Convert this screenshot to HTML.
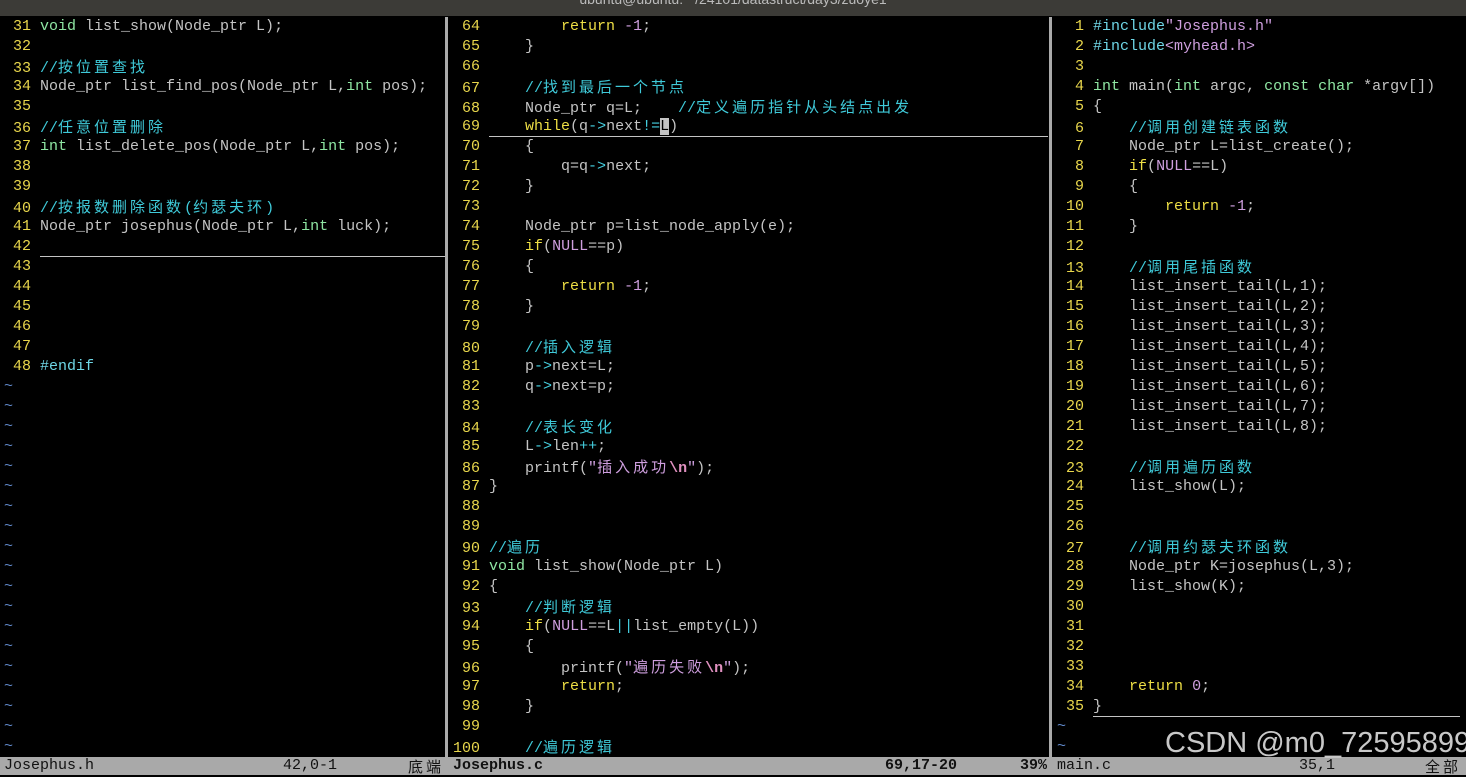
<!DOCTYPE html>
<html><head><meta charset="utf-8"><style>
*{margin:0;padding:0}
body{width:1466px;height:775px;background:#000;overflow:hidden;position:relative;font-family:"Liberation Mono","Noto Sans CJK SC",monospace;font-size:15px;color:#c4c4c4}
.tb{position:absolute;left:0;top:0;width:1466px;height:16px;background:#3c3b37;overflow:hidden}
.tb span{position:absolute;left:0;width:1466px;text-align:center;top:-9px;font-family:"Liberation Sans",sans-serif;font-size:14px;color:#bbb}
.pane{position:absolute;top:17px;line-height:20px;overflow:hidden}
.pane div{height:20px;position:relative;white-space:pre;line-height:20px;overflow:visible}
.n{color:#e8d64c}
.k{color:#8fe6a3}
.s{color:#eedf45}
.c{color:#3fcad9}
.p{color:#6fd6e6}
.q{color:#cf9fdf}
.o{color:#45cfe0}
.t{color:#5f87c8}
.z{font-family:"Noto Sans CJK SC",sans-serif;letter-spacing:3px;line-height:20px}
.sep{position:absolute;top:17px;height:740px;width:3px;background:#aaa}
.st{position:absolute;top:757px;left:0;width:1466px;height:18px;background:#a9a9a9;color:#111;white-space:pre;line-height:18px}
.st span{position:absolute;top:0}
.wm{position:absolute;left:1165px;top:727px;font-family:"Liberation Sans",sans-serif;font-size:29px;color:rgba(235,235,235,.85);white-space:nowrap}
.cur{background:#c4c4c4;color:#000}
.ul{position:absolute;left:36px;right:0;top:0;height:19px;border-bottom:1px solid #c4c4c4}
</style></head><body>
<div class="tb"><span>ubuntu@ubuntu: ~/24101/datastruct/day3/zuoye1</span></div>

<div class="pane" style="left:4px;width:441px"><div><span class="n"> 31 </span><span class="k">void</span> list_show(Node_ptr L);</div><div><span class="n"> 32 </span></div><div><span class="n"> 33 </span><span class="c">//<span class="z">按位置查找</span></span></div><div><span class="n"> 34 </span>Node_ptr list_find_pos(Node_ptr L,<span class="k">int</span> pos);</div><div><span class="n"> 35 </span></div><div><span class="n"> 36 </span><span class="c">//<span class="z">任意位置删除</span></span></div><div><span class="n"> 37 </span><span class="k">int</span> list_delete_pos(Node_ptr L,<span class="k">int</span> pos);</div><div><span class="n"> 38 </span></div><div><span class="n"> 39 </span></div><div><span class="n"> 40 </span><span class="c">//<span class="z">按报数删除函数</span>(<span class="z">约瑟夫环</span>)</span></div><div><span class="n"> 41 </span>Node_ptr josephus(Node_ptr L,<span class="k">int</span> luck);</div><div><span class="n"> 42 </span><span class="ul"></span></div><div><span class="n"> 43 </span></div><div><span class="n"> 44 </span></div><div><span class="n"> 45 </span></div><div><span class="n"> 46 </span></div><div><span class="n"> 47 </span></div><div><span class="n"> 48 </span><span class="p">#endif</span></div><div class="t">~</div><div class="t">~</div><div class="t">~</div><div class="t">~</div><div class="t">~</div><div class="t">~</div><div class="t">~</div><div class="t">~</div><div class="t">~</div><div class="t">~</div><div class="t">~</div><div class="t">~</div><div class="t">~</div><div class="t">~</div><div class="t">~</div><div class="t">~</div><div class="t">~</div><div class="t">~</div><div class="t">~</div></div>
<div class="sep" style="left:445px"></div>

<div class="pane" style="left:453px;width:595px"><div><span class="n"> 64 </span>        <span class="s">return</span> <span class="q">-1</span>;</div><div><span class="n"> 65 </span>    }</div><div><span class="n"> 66 </span></div><div><span class="n"> 67 </span>    <span class="c">//<span class="z">找到最后一个节点</span></span></div><div><span class="n"> 68 </span>    Node_ptr q=L;    <span class="c">//<span class="z">定义遍历指针从头结点出发</span></span></div><div><span class="n"> 69 </span>    <span class="s">while</span>(q<span class="o">-&gt;</span>next<span class="o">!=</span><span class="cur">L</span>)<span class="ul"></span></div><div><span class="n"> 70 </span>    {</div><div><span class="n"> 71 </span>        q=q<span class="o">-&gt;</span>next;</div><div><span class="n"> 72 </span>    }</div><div><span class="n"> 73 </span></div><div><span class="n"> 74 </span>    Node_ptr p=list_node_apply(e);</div><div><span class="n"> 75 </span>    <span class="s">if</span>(<span class="q">NULL</span>==p)</div><div><span class="n"> 76 </span>    {</div><div><span class="n"> 77 </span>        <span class="s">return</span> <span class="q">-1</span>;</div><div><span class="n"> 78 </span>    }</div><div><span class="n"> 79 </span></div><div><span class="n"> 80 </span>    <span class="c">//<span class="z">插入逻辑</span></span></div><div><span class="n"> 81 </span>    p<span class="o">-&gt;</span>next=L;</div><div><span class="n"> 82 </span>    q<span class="o">-&gt;</span>next=p;</div><div><span class="n"> 83 </span></div><div><span class="n"> 84 </span>    <span class="c">//<span class="z">表长变化</span></span></div><div><span class="n"> 85 </span>    L<span class="o">-&gt;</span>len<span class="o">++</span>;</div><div><span class="n"> 86 </span>    printf(<span class="q">"<span class="z">插入成功</span><b style="color:#e090c0">\n</b>"</span>);</div><div><span class="n"> 87 </span>}</div><div><span class="n"> 88 </span></div><div><span class="n"> 89 </span></div><div><span class="n"> 90 </span><span class="c">//<span class="z">遍历</span></span></div><div><span class="n"> 91 </span><span class="k">void</span> list_show(Node_ptr L)</div><div><span class="n"> 92 </span>{</div><div><span class="n"> 93 </span>    <span class="c">//<span class="z">判断逻辑</span></span></div><div><span class="n"> 94 </span>    <span class="s">if</span>(<span class="q">NULL</span>==L<span class="o">||</span>list_empty(L))</div><div><span class="n"> 95 </span>    {</div><div><span class="n"> 96 </span>        printf(<span class="q">"<span class="z">遍历失败</span><b style="color:#e090c0">\n</b>"</span>);</div><div><span class="n"> 97 </span>        <span class="s">return</span>;</div><div><span class="n"> 98 </span>    }</div><div><span class="n"> 99 </span></div><div><span class="n">100 </span>    <span class="c">//<span class="z">遍历逻辑</span></span></div></div>
<div class="sep" style="left:1049px"></div>

<div class="pane" style="left:1057px;width:409px"><div><span class="n">  1 </span><span class="p">#include</span><span class="q">"Josephus.h"</span></div><div><span class="n">  2 </span><span class="p">#include</span><span class="q">&lt;myhead.h&gt;</span></div><div><span class="n">  3 </span></div><div><span class="n">  4 </span><span class="k">int</span> main(<span class="k">int</span> argc, <span class="k">const</span> <span class="k">char</span> *argv[])</div><div><span class="n">  5 </span>{</div><div><span class="n">  6 </span>    <span class="c">//<span class="z">调用创建链表函数</span></span></div><div><span class="n">  7 </span>    Node_ptr L=list_create();</div><div><span class="n">  8 </span>    <span class="s">if</span>(<span class="q">NULL</span>==L)</div><div><span class="n">  9 </span>    {</div><div><span class="n"> 10 </span>        <span class="s">return</span> <span class="q">-1</span>;</div><div><span class="n"> 11 </span>    }</div><div><span class="n"> 12 </span></div><div><span class="n"> 13 </span>    <span class="c">//<span class="z">调用尾插函数</span></span></div><div><span class="n"> 14 </span>    list_insert_tail(L,1);</div><div><span class="n"> 15 </span>    list_insert_tail(L,2);</div><div><span class="n"> 16 </span>    list_insert_tail(L,3);</div><div><span class="n"> 17 </span>    list_insert_tail(L,4);</div><div><span class="n"> 18 </span>    list_insert_tail(L,5);</div><div><span class="n"> 19 </span>    list_insert_tail(L,6);</div><div><span class="n"> 20 </span>    list_insert_tail(L,7);</div><div><span class="n"> 21 </span>    list_insert_tail(L,8);</div><div><span class="n"> 22 </span></div><div><span class="n"> 23 </span>    <span class="c">//<span class="z">调用遍历函数</span></span></div><div><span class="n"> 24 </span>    list_show(L);</div><div><span class="n"> 25 </span></div><div><span class="n"> 26 </span></div><div><span class="n"> 27 </span>    <span class="c">//<span class="z">调用约瑟夫环函数</span></span></div><div><span class="n"> 28 </span>    Node_ptr K=josephus(L,3);</div><div><span class="n"> 29 </span>    list_show(K);</div><div><span class="n"> 30 </span></div><div><span class="n"> 31 </span></div><div><span class="n"> 32 </span></div><div><span class="n"> 33 </span></div><div><span class="n"> 34 </span>    <span class="s">return</span> <span class="q">0</span>;</div><div><span class="n"> 35 </span>}<span class="ul" style="right:6px"></span></div><div class="t">~</div><div class="t">~</div></div>

<div class="st"><span style="left:4px">Josephus.h</span><span style="left:283px">42,0-1</span><span style="left:408px" class="z">底端</span><span style="left:453px;font-weight:bold">Josephus.c</span><span style="left:885px;font-weight:bold">69,17-20</span><span style="left:1020px;font-weight:bold">39%</span><span style="left:1057px">main.c</span><span style="left:1299px">35,1</span><span style="left:1425px" class="z">全部</span></div>
<div class="wm">CSDN @m0_72595899</div>
</body></html>
